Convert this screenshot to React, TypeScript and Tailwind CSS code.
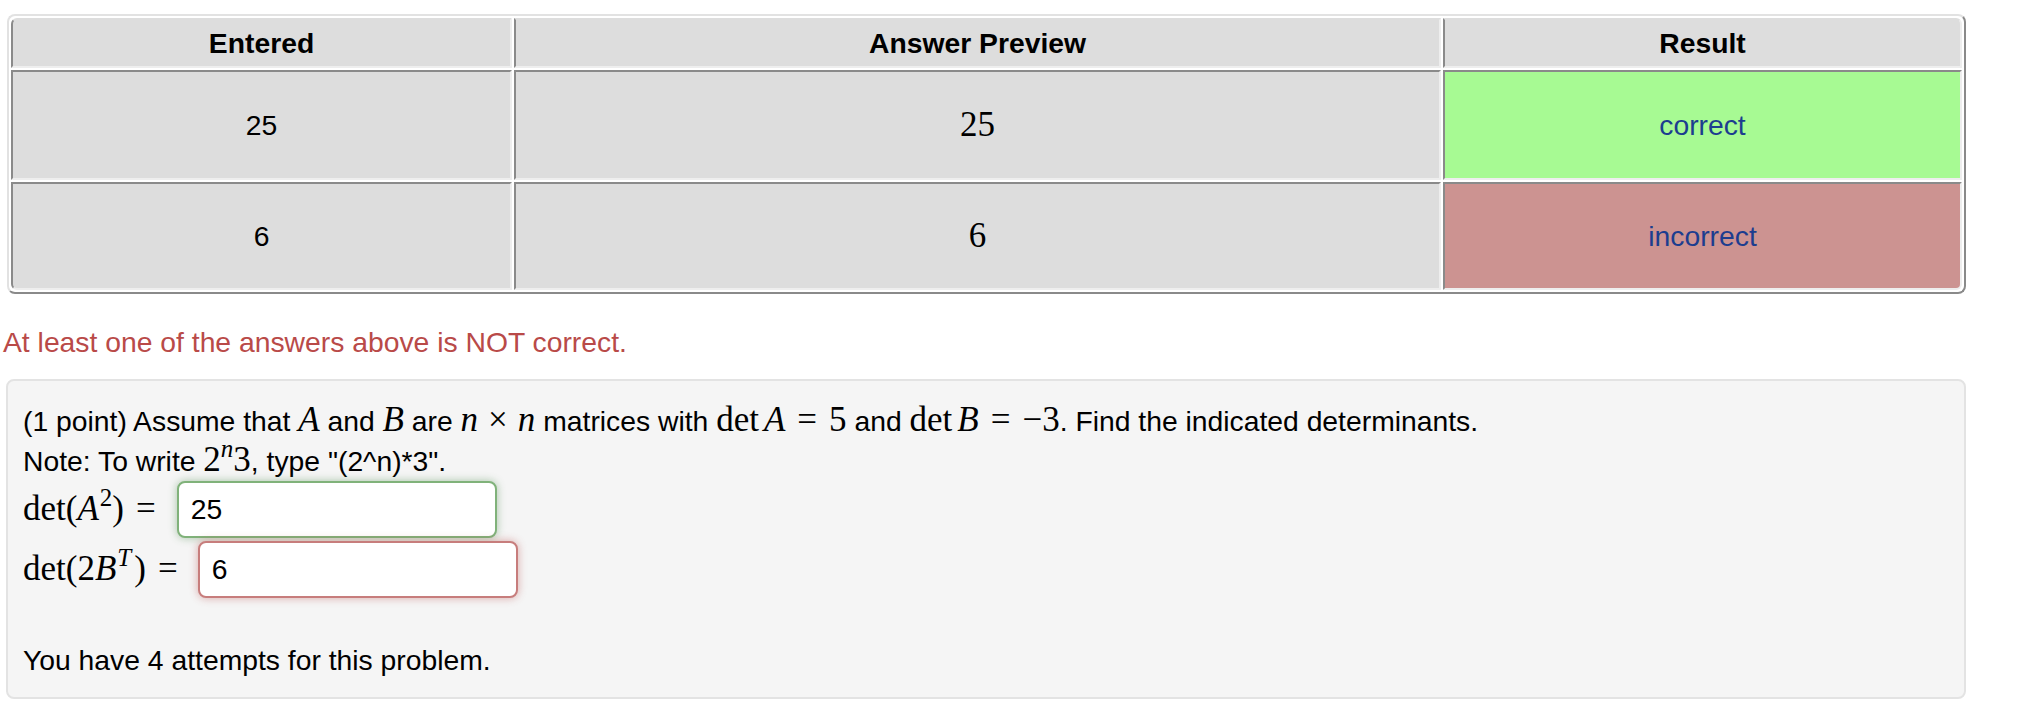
// Attempt results + problem card (WeBWorK style, rendered at 2x)

const sans = "font-['Liberation_Sans',Arial,sans-serif]"
const serif = "font-['Liberation_Serif','Times_New_Roman',serif]"

// ── small math helpers ──────────────────────────────────────────
function Mi({ children }: { children: React.ReactNode }) {
  return <span className={`${serif} italic text-[35px]`}>{children}</span>
}

function Mn({ children }: { children: React.ReactNode }) {
  return <span className={`${serif} text-[35px]`}>{children}</span>
}

function Eq() {
  return <span className={`${serif} text-[35px] mx-[12px]`}>=</span>
}

// ── table cells ─────────────────────────────────────────────────
const cellBase =
  'border-2 border-t-[#8a8a8a] border-l-[#8a8a8a] border-r-[#eeeeee] border-b-[#eeeeee] text-center align-middle'

function HeadCell({ children, corner }: { children: React.ReactNode; corner?: string }) {
  return (
    <th
      className={`border-2 border-t-[#dddddd] border-l-[#8a8a8a] border-r-[#eeeeee] border-b-[#eeeeee] bg-[#dddddd] font-bold text-center h-[50px] ${corner ?? ''}`}
    >
      {children}
    </th>
  )
}

export default function App() {
  return (
    <div className={`w-[2034px] h-[716px] bg-white text-black text-[28.3px] leading-[40px] ${sans}`}>
      <div className="pl-[6px] pt-[14px] w-[1966px]">

        {/* ── results table ── */}
        <table
          className="ml-[1px] w-[1959px] table-fixed border-separate border-spacing-[2px] border-2 border-t-[#e2e2e2] border-l-[#e2e2e2] border-r-[#8a8a8a] border-b-[#8a8a8a] rounded-[8px]"
        >
          <colgroup>
            <col className="w-[501px]" />
            <col className="w-[927px]" />
            <col className="w-[519px]" />
          </colgroup>
          <thead>
            <tr>
              <HeadCell corner="rounded-tl-[6px]">Entered</HeadCell>
              <HeadCell>Answer Preview</HeadCell>
              <HeadCell corner="rounded-tr-[6px]">Result</HeadCell>
            </tr>
          </thead>
          <tbody>
            <tr>
              <td className={`${cellBase} bg-[#dddddd] h-[110px]`}>25</td>
              <td className={`${cellBase} bg-[#dddddd]`}>
                <Mn>25</Mn>
              </td>
              <td className={`${cellBase} bg-[#a7fa93] text-[#1c3d8f]`}>correct</td>
            </tr>
            <tr>
              <td className={`${cellBase} bg-[#dddddd] h-[108px] rounded-bl-[6px]`}>6</td>
              <td className={`${cellBase} bg-[#dddddd]`}>
                <Mn>6</Mn>
              </td>
              <td className={`${cellBase} bg-[#cc9391] text-[#1c3d8f] rounded-br-[6px]`}>incorrect</td>
            </tr>
          </tbody>
        </table>

        {/* ── feedback message ── */}
        <p className="mt-[28px] -ml-[3px] text-[#b94a48]">At least one of the answers above is NOT correct.</p>

        {/* ── problem card ── */}
        <div className="mt-[17px] w-[1960px] border-2 border-[#e3e3e3] bg-[#f5f5f5] rounded-[8px] pl-[15px] pt-[19px] pb-[17px]">
          <div className="h-[40px] whitespace-nowrap">
            (1 point) Assume that <Mi>A</Mi> and <Mi>B</Mi> are <Mi>n</Mi>
            <span className={`${serif} text-[35px] mx-[10px]`}>×</span>
            <Mi>n</Mi> matrices with <Mn>det</Mn>
            <span className="ml-[5px]"><Mi>A</Mi></span>
            <Eq />
            <Mn>5</Mn> and <Mn>det</Mn>
            <span className="ml-[5px]"><Mi>B</Mi></span>
            <Eq />
            <Mn>−3</Mn>. Find the indicated determinants.
          </div>
          <div className="h-[40px] whitespace-nowrap">
            Note: To write <Mn>2</Mn>
            <sup className={`${serif} italic text-[25px] relative -top-[14px]`}>n</sup>
            <Mn>3</Mn>, type "(2^n)*3".
          </div>

          <div className="flex items-center h-[58px]">
            <span className="whitespace-nowrap">
              <Mn>det(</Mn>
              <Mi>A</Mi>
              <sup className={`${serif} text-[25px] relative -top-[14px] ml-[1px]`}>2</sup>
              <Mn>)</Mn>
              <Eq />
            </span>
            <input
              readOnly
              value="25"
              className="ml-[9px] w-[320px] h-[57px] pl-[12px] bg-white rounded-[8px] border-2 border-[#80b27a] shadow-[0_0_8px_rgba(70,136,71,0.45)] outline-none"
            />
          </div>
          <div className="flex items-center h-[58px] mt-[2px]">
            <span className="whitespace-nowrap">
              <Mn>det(2</Mn>
              <Mi>B</Mi>
              <sup className={`${serif} italic text-[25px] relative -top-[14px] ml-[1px] mr-[3px]`}>T</sup>
              <Mn>)</Mn>
              <Eq />
            </span>
            <input
              readOnly
              value="6"
              className="ml-[8px] w-[320px] h-[57px] pl-[12px] bg-white rounded-[8px] border-2 border-[#c77d7c] shadow-[0_0_8px_rgba(185,74,72,0.45)] outline-none"
            />
          </div>

          <div className="mt-[42px] h-[40px]">You have 4 attempts for this problem.</div>
        </div>
      </div>
    </div>
  )
}
